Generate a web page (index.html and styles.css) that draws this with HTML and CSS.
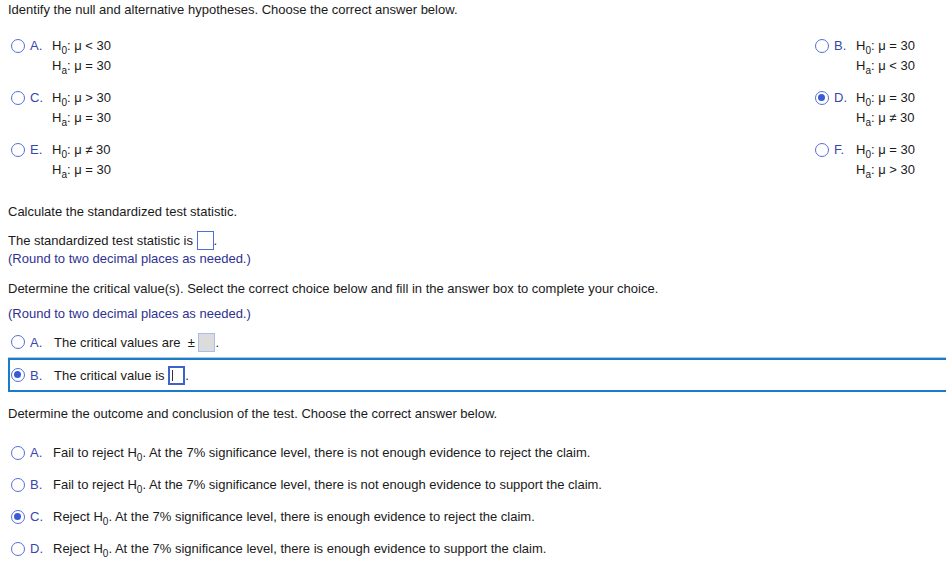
FILE: index.html
```html
<!DOCTYPE html>
<html lang="en">
<head>
<meta charset="utf-8">
<title>Hypothesis test</title>
<link rel="stylesheet" href="styles.css">
</head>
<body>
<div class="page">
  <p class="prompt title">Identify the null and alternative hypotheses. Choose the correct answer below.</p>

  <div class="hyp-grid">
    <div class="hyp-col">
      <div class="opt hyp">
        <span class="radio"></span><span class="letter">A.</span>
        <div class="hyp-lines">
          <div>H<sub>0</sub>: μ &lt; 30</div>
          <div>H<sub>a</sub>: μ = 30</div>
        </div>
      </div>
      <div class="opt hyp">
        <span class="radio"></span><span class="letter">C.</span>
        <div class="hyp-lines">
          <div>H<sub>0</sub>: μ &gt; 30</div>
          <div>H<sub>a</sub>: μ = 30</div>
        </div>
      </div>
      <div class="opt hyp">
        <span class="radio"></span><span class="letter">E.</span>
        <div class="hyp-lines">
          <div>H<sub>0</sub>: μ ≠ 30</div>
          <div>H<sub>a</sub>: μ = 30</div>
        </div>
      </div>
    </div>
    <div class="hyp-col">
      <div class="opt hyp">
        <span class="radio"></span><span class="letter">B.</span>
        <div class="hyp-lines">
          <div>H<sub>0</sub>: μ = 30</div>
          <div>H<sub>a</sub>: μ &lt; 30</div>
        </div>
      </div>
      <div class="opt hyp">
        <span class="radio checked"></span><span class="letter">D.</span>
        <div class="hyp-lines">
          <div>H<sub>0</sub>: μ = 30</div>
          <div>H<sub>a</sub>: μ ≠ 30</div>
        </div>
      </div>
      <div class="opt hyp">
        <span class="radio"></span><span class="letter">F.</span>
        <div class="hyp-lines">
          <div>H<sub>0</sub>: μ = 30</div>
          <div>H<sub>a</sub>: μ &gt; 30</div>
        </div>
      </div>
    </div>
  </div>

  <p class="prompt calc">Calculate the standardized test statistic.</p>
  <p class="stat-line">The standardized test statistic is <span class="answer-box"></span>.</p>
  <p class="note">(Round to two decimal places as needed.)</p>

  <p class="prompt crit">Determine the critical value(s). Select the correct choice below and fill in the answer box to complete your choice.</p>
  <p class="note note-crit">(Round to two decimal places as needed.)</p>

  <div class="opt crit-opt first">
    <span class="radio"></span><span class="letter">A.</span>
    <span class="crit-text">The critical values are&nbsp; ± <span class="answer-box disabled"></span>.</span>
  </div>
  <div class="opt crit-opt active">
    <span class="radio checked"></span><span class="letter">B.</span>
    <span class="crit-text">The critical value is <span class="answer-box focused"><span class="caret"></span></span>.</span>
  </div>

  <p class="prompt outcome">Determine the outcome and conclusion of the test. Choose the correct answer below.</p>

  <div class="concl-list">
    <div class="opt concl">
      <span class="radio"></span><span class="letter">A.</span>
      <span>Fail to reject H<sub>0</sub>. At the 7% significance level, there is not enough evidence to reject the claim.</span>
    </div>
    <div class="opt concl">
      <span class="radio"></span><span class="letter">B.</span>
      <span>Fail to reject H<sub>0</sub>. At the 7% significance level, there is not enough evidence to support the claim.</span>
    </div>
    <div class="opt concl">
      <span class="radio checked"></span><span class="letter">C.</span>
      <span>Reject H<sub>0</sub>. At the 7% significance level, there is enough evidence to reject the claim.</span>
    </div>
    <div class="opt concl">
      <span class="radio"></span><span class="letter">D.</span>
      <span>Reject H<sub>0</sub>. At the 7% significance level, there is enough evidence to support the claim.</span>
    </div>
  </div>
</div>
</body>
</html>
```
FILE: styles.css
```css
html, body {
  margin: 0;
  padding: 0;
  background: #ffffff;
}

body {
  font-family: "Liberation Sans", Arial, sans-serif;
  font-size: 13px;
  color: #1a1a1a;
}

.page {
  padding: 1px 0 0 8px;
}

p {
  margin: 0;
}

.prompt {
  line-height: 18px;
}

sub {
  font-size: 10px;
  vertical-align: -4px;
  line-height: 0;
}

/* shared option row: radio, letter, content */
.opt {
  display: flex;
  align-items: flex-start;
}

.radio {
  flex: none;
  box-sizing: border-box;
  width: 14px;
  height: 14px;
  border: 1.5px solid #5470d6;
  border-radius: 50%;
  margin-left: 3px;
  margin-right: 5px;
  position: relative;
  background: #fff;
}

.radio.checked::after {
  content: "";
  position: absolute;
  left: 2px;
  top: 2px;
  width: 7px;
  height: 7px;
  border-radius: 50%;
  background: #3a5ad4;
}

.letter {
  flex: none;
  width: 22px;
  color: #3b45ad;
}

/* hypotheses */
.hyp-grid {
  display: grid;
  grid-template-columns: 1fr 134px;
  margin-top: 17px;
}

.hyp-col {
  display: flex;
  flex-direction: column;
  gap: 12px;
}

.hyp {
  line-height: 20px;
}

.hyp .radio {
  margin-top: 3px;
}

.hyp-lines div {
  height: 20px;
}

/* test statistic */
.calc {
  margin-top: 23px;
}

.stat-line {
  margin-top: 10px;
  line-height: 20px;
}

.note {
  color: #2f3191;
  line-height: 16px;
}

.answer-box {
  display: inline-block;
  box-sizing: border-box;
  width: 17px;
  height: 19px;
  border: 1px solid #4f6fd4;
  vertical-align: -5px;
  background: #fff;
  position: relative;
}

.answer-box.disabled {
  background: #dcdcdc;
  border-color: #a9bde6;
}

.answer-box.focused {
  border: 2px solid #3b63c9;
}

.caret {
  position: absolute;
  left: 2px;
  top: 2px;
  width: 1px;
  height: 11px;
  background: #333;
}

/* critical values */
.crit {
  margin-top: 13px;
}

.note-crit {
  margin-top: 8px;
}

.crit-opt {
  align-items: center;
  height: 24px;
}

.crit-opt.first {
  margin-top: 8px;
}

.crit-opt .letter {
  width: 24px;
}

.crit-opt.active {
  margin-top: 4px;
  height: 30px;
  border: 2px solid #1c7bc9;
  border-right: none;
  box-shadow: 0 -1px 0 #a9cdee;
}

.crit-opt.active .radio {
  margin-left: 1px;
}

/* conclusions */
.outcome {
  margin-top: 13px;
}

.concl-list {
  display: flex;
  flex-direction: column;
  gap: 12px;
  margin-top: 20px;
}

.concl {
  line-height: 20px;
  align-items: center;
}

.concl .letter {
  width: 23px;
}
```
